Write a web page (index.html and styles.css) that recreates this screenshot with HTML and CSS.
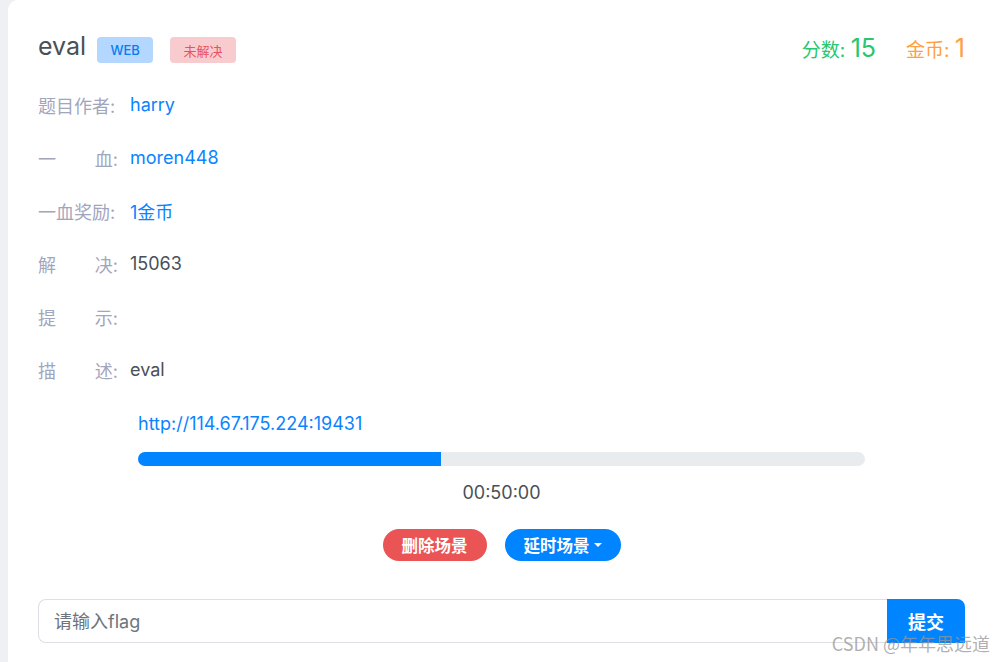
FILE: index.html
```html
<!DOCTYPE html>
<html lang="zh">
<head>
<meta charset="utf-8">
<link rel="stylesheet" href="styles.css">
</head>
<body>
<div class="card">
  <div class="header">
    <div class="title-wrap">
      <span class="title">eval</span>
      <span class="badge badge-web">WEB</span>
      <span class="badge badge-unsolved">未解决</span>
    </div>
    <div class="scores">
      <span class="score score-green">分数: <b>15</b></span>
      <span class="score score-orange">金币: <b>1</b></span>
    </div>
  </div>
  <div class="details">
    <div class="row"><span class="label"><span>题目作者:</span></span><span class="value link">harry</span></div>
    <div class="row"><span class="label"><span>一</span><span>血:</span></span><span class="value link">moren448</span></div>
    <div class="row"><span class="label"><span>一血奖励:</span></span><span class="value link">1金币</span></div>
    <div class="row"><span class="label"><span>解</span><span>决:</span></span><span class="value">15063</span></div>
    <div class="row"><span class="label"><span>提</span><span>示:</span></span><span class="value"></span></div>
    <div class="row"><span class="label"><span>描</span><span>述:</span></span><span class="value">eval</span></div>
  </div>
  <div class="scene">
    <div class="url">http://114.67.175.224:19431</div>
    <div class="progress"><div class="progress-fill" style="width: 41.7%"></div></div>
    <div class="timer">00:50:00</div>
    <div class="actions">
      <button class="btn btn-red">删除场景</button>
      <button class="btn btn-blue">延时场景<span class="caret"></span></button>
    </div>
  </div>
  <div class="flag-form">
    <input class="flag-input" type="text" placeholder="请输入flag">
    <button class="flag-submit">提交</button>
  </div>
</div>
<div class="watermark">CSDN @年年思远道</div>
</body>
</html>
```
FILE: styles.css
```css
html, body {
  margin: 0;
  padding: 0;
}
body {
  background: #eef0f3;
  font-family: "Inter", "Noto Sans CJK SC", sans-serif;
  color: #495057;
  width: 995px;
  height: 662px;
  overflow: hidden;
  position: relative;
}
.card {
  margin-left: 8px;
  background: #fff;
  border-top-left-radius: 10px;
  padding: 30px 30px 0 30px;
  height: 662px;
  box-sizing: border-box;
}
.header {
  display: flex;
  justify-content: space-between;
  align-items: center;
  height: 36px;
}
.title-wrap {
  display: flex;
  align-items: center;
}
.title {
  font-size: 25px;
  color: #495057;
  line-height: 36px;
  margin-top: -4px;
}
.badge {
  display: inline-flex;
  align-items: center;
  justify-content: center;
  height: 26px;
  border-radius: 4px;
  font-size: 13px;
  margin-top: 4px;
}
.badge-web {
  margin-left: 11px;
  width: 56px;
  background: #b3d7ff;
  color: #0a7cf0;
  font-weight: 500;
}
.badge-unsolved {
  margin-left: 17px;
  width: 66px;
  background: #f8cccf;
  color: #e8525b;
}
.scores {
  display: flex;
  align-items: baseline;
  gap: 30px;
}
.score {
  font-size: 19px;
}
.score b {
  font-weight: 400;
  font-size: 25px;
}
.score-green { color: #28c76f; }
.score-orange { color: #ff9f43; }
.details {
  margin-top: 12px;
}
.row {
  display: flex;
  align-items: center;
  height: 53px;
  font-size: 18px;
}
.label {
  width: 80px;
  color: #a2a6bd;
  display: flex;
  justify-content: space-between;
  margin-right: 12px;
}
.value {
  color: #495057;
}
.value.link {
  color: #0a84ff;
}
.scene {
  margin: 0 100px;
}
.url {
  margin-top: 14px;
  font-size: 18px;
  line-height: 27px;
  color: #0a84ff;
}
.progress {
  margin-top: 15px;
  height: 14px;
  border-radius: 7px;
  background: #e9ecef;
  overflow: hidden;
}
.progress-fill {
  height: 100%;
  background: #0084ff;
}
.timer {
  margin-top: 13px;
  text-align: center;
  font-size: 18px;
  line-height: 27px;
  color: #495057;
}
.actions {
  margin-top: 23px;
  display: flex;
  justify-content: center;
  gap: 18px;
}
.btn {
  height: 32px;
  border: none;
  border-radius: 16px;
  color: #fff;
  font-family: "Noto Sans CJK SC", sans-serif;
  font-weight: 700;
  font-size: 16.5px;
  padding: 0 19px;
  display: inline-flex;
  align-items: center;
}
.btn-red {
  background: #ea5455;
}
.btn-blue {
  background: #0084ff;
}
.caret {
  display: inline-block;
  width: 0;
  height: 0;
  border-left: 4px solid transparent;
  border-right: 4px solid transparent;
  border-top: 4px solid #fff;
  margin-left: 4px;
}
.flag-form {
  margin-top: 38px;
  display: flex;
  height: 44px;
}
.flag-input {
  flex: 1;
  height: 44px;
  box-sizing: border-box;
  border: 1px solid #dcdfe3;
  border-right: none;
  border-radius: 8px 0 0 8px;
  padding: 0 15px;
  font-size: 18px;
  font-family: "Inter", "Noto Sans CJK SC", sans-serif;
  outline: none;
}
.flag-input::placeholder {
  color: #6c757d;
}
.flag-submit {
  width: 78px;
  height: 44px;
  border: none;
  background: #0084ff;
  color: #fff;
  font-family: "Noto Sans CJK SC", sans-serif;
  font-weight: 700;
  font-size: 18px;
  border-radius: 0 8px 0 0;
}
.watermark {
  position: absolute;
  right: 5px;
  top: 630px;
  font-family: "Noto Sans CJK SC", sans-serif;
  font-size: 18px;
  color: rgba(150, 150, 150, 0.75);
  line-height: 26px;
}
```
